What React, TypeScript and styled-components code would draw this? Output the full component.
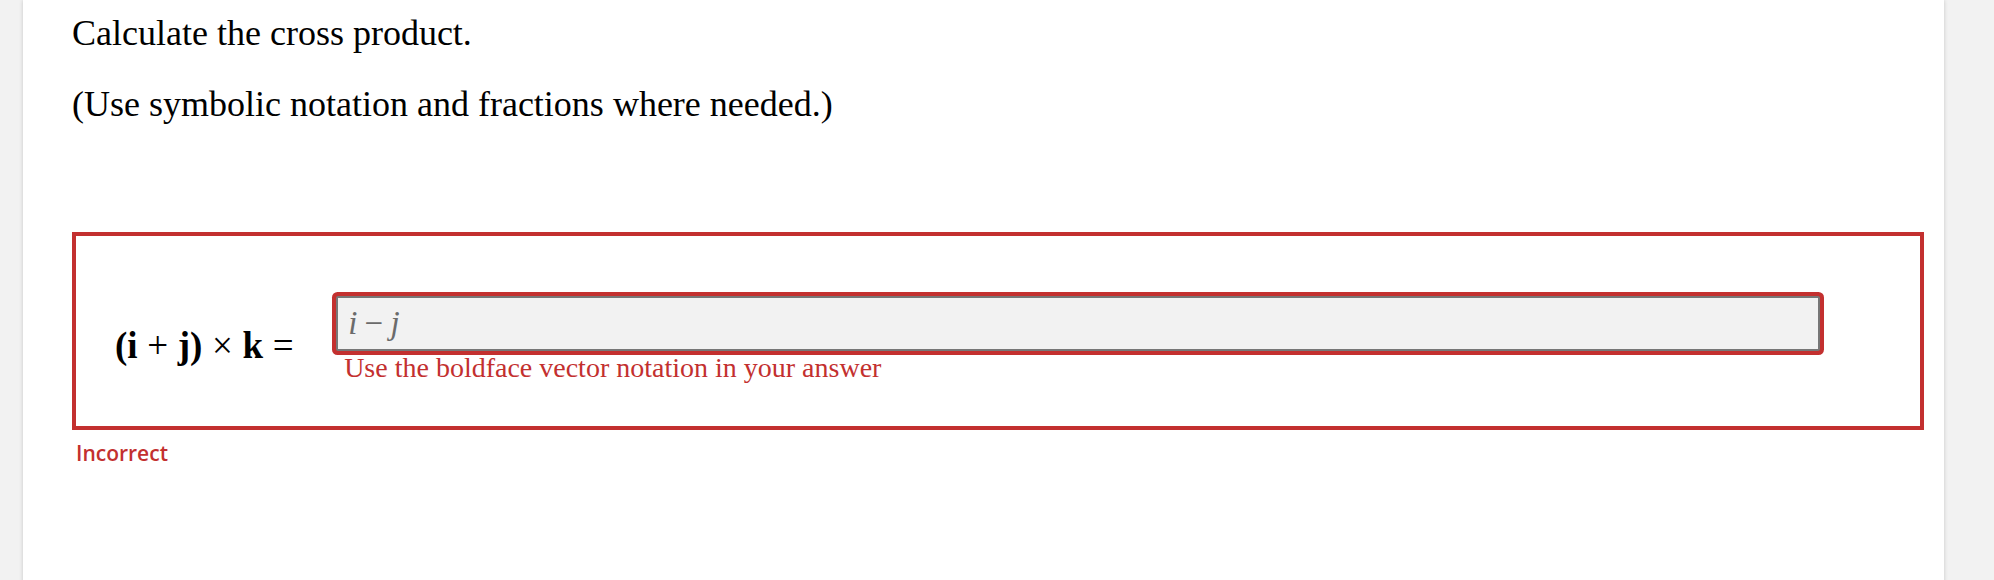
import React from 'react';
import styled, { createGlobalStyle } from 'styled-components';

const GlobalStyle = createGlobalStyle`
  html, body {
    margin: 0;
    padding: 0;
    background: #f2f2f2;
  }
  body {
    font-family: "Liberation Serif", "Times New Roman", serif;
    overflow: hidden;
  }
`;

const Page = styled.div`
  display: flex;
  padding: 0 50px 0 23px;
  min-height: 580px;
`;

const Panel = styled.main`
  flex: 1;
  background: #ffffff;
  box-shadow: 0 0 4px rgba(0, 0, 0, 0.18);
  padding: 13px 20px 40px 49px;
  min-height: 600px;
`;

const Prompt = styled.p`
  margin: 0 0 30px;
  font-size: 36px;
  line-height: 41px;
  color: #000;
`;

const AnswerBox = styled.section`
  box-sizing: border-box;
  height: 198px;
  margin-top: 107px;
  border: 4px solid #c3302f;
  display: flex;
  align-items: center;
  padding: 0 100px 0 39px;
`;

const MathLabel = styled.div`
  font-family: "Liberation Serif", "Times New Roman", serif;
  font-weight: 700;
  font-size: 37px;
  color: #000;
  margin: 28px 33px 0 0;
  white-space: nowrap;
`;

const Op = styled.span`
  font-weight: 400;
  margin: 0 0.26em;
`;

const Field = styled.div`
  flex: 1;
  display: flex;
  flex-direction: column;
  margin-top: 16px;
`;

const Input = styled.div`
  box-sizing: border-box;
  height: 55px;
  border: 2px solid #777777;
  border-radius: 2px;
  background: #f2f2f2;
  box-shadow: 0 0 0 4px #c3302f;
  display: flex;
  align-items: center;
  padding: 0 10px;
  font-family: "Liberation Serif", "Times New Roman", serif;
  font-style: italic;
  font-size: 33px;
  color: #6b6b6b;
`;

const Minus = styled.span`
  font-style: normal;
  margin: 0 0.22em;
`;

const Hint = styled.div`
  margin-top: 1px;
  padding-left: 8px;
  font-size: 28px;
  line-height: 31px;
  color: #c3302f;
`;

const Status = styled.div`
  margin: 9px 0 0 4px;
  font-family: "Open Sans", "Noto Sans", sans-serif;
  font-weight: 600;
  font-size: 21px;
  color: #c3302f;
`;

export default function App() {
  return (
    <>
      <GlobalStyle />
      <Page>
        <Panel>
          <Prompt>Calculate the cross product.</Prompt>
          <Prompt>(Use symbolic notation and fractions where needed.)</Prompt>
          <AnswerBox>
            <MathLabel>
              (i<Op>+</Op>j)<Op>×</Op>k<Op>=</Op>
            </MathLabel>
            <Field>
              <Input>
                i<Minus>−</Minus>j
              </Input>
              <Hint>Use the boldface vector notation in your answer</Hint>
            </Field>
          </AnswerBox>
          <Status>Incorrect</Status>
        </Panel>
      </Page>
    </>
  );
}
